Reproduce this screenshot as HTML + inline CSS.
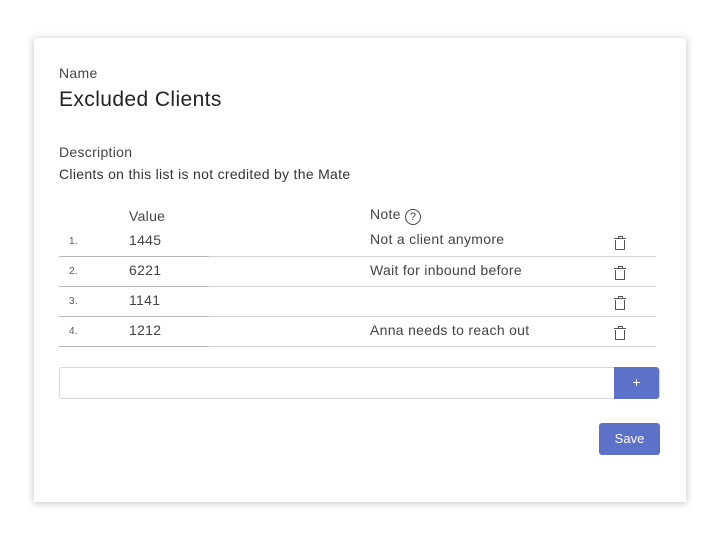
<!DOCTYPE html>
<html><head><style>
body{margin:0;width:725px;height:551px;background:#fff;font-family:"Liberation Sans",sans-serif;color:#333;position:relative;overflow:hidden}
.card{position:absolute;left:34px;top:38px;width:652px;height:464px;background:#fff;box-shadow:0 1px 8px rgba(0,0,0,.25)}
.t{position:absolute;white-space:nowrap;letter-spacing:.3px}
.line{position:absolute;left:59px;width:597px;height:1px;background:#d4d4d4}
.line:before{content:"";position:absolute;left:0;top:0;width:150px;height:1px;background:#b8b8b8}
.num{font-size:10px;color:#555}
.v{font-size:14px;color:#444}
.bin{position:absolute;width:8px;height:9px;border:1px solid #555;border-top:none}
.bin:before{content:"";position:absolute;left:-2px;top:-2px;width:12px;height:1px;background:#555}
.bin:after{content:"";position:absolute;left:2px;top:-4px;width:3px;height:1px;border:1px solid #555;border-bottom:none}
</style></head><body>
<div class="card"></div>
<div class="t" style="left:59px;top:65px;font-size:14px;color:#444">Name</div>
<div class="t" style="left:59px;top:88px;font-size:21px;color:#222;letter-spacing:.4px">Excluded Clients</div>
<div class="t" style="left:59px;top:144px;font-size:14px;color:#444">Description</div>
<div class="t" style="left:59px;top:166px;font-size:14px;color:#333">Clients on this list is not credited by the Mate</div>
<div class="t v" style="left:129px;top:208px">Value</div>
<div class="t v" style="left:370px;top:206px">Note <span style="display:inline-block;width:14px;height:14px;border:1px solid #444;border-radius:50%;font-size:11px;text-align:center;line-height:14px;vertical-align:-1px;letter-spacing:0">?</span></div>

<div class="t num" style="left:69px;top:236px">1.</div><div class="t v" style="left:129px;top:232px">1445</div><div class="t v" style="left:370px;top:231px">Not a client anymore</div><div class="bin" style="left:615px;top:240px"></div>
<div class="line" style="top:256px"></div>
<div class="t num" style="left:69px;top:266px">2.</div><div class="t v" style="left:129px;top:262px">6221</div><div class="t v" style="left:370px;top:262px">Wait for inbound before</div><div class="bin" style="left:615px;top:270px"></div>
<div class="line" style="top:286px"></div>
<div class="t num" style="left:69px;top:296px">3.</div><div class="t v" style="left:129px;top:292px">1141</div><div class="bin" style="left:615px;top:300px"></div>
<div class="line" style="top:316px"></div>
<div class="t num" style="left:69px;top:326px">4.</div><div class="t v" style="left:129px;top:322px">1212</div><div class="t v" style="left:370px;top:322px">Anna needs to reach out</div><div class="bin" style="left:615px;top:330px"></div>
<div class="line" style="top:346px"></div>

<div style="position:absolute;left:59px;top:367px;width:599px;height:30px;border:1px solid #d8d8d8;border-radius:3px"></div>
<div style="position:absolute;left:614px;top:367px;width:45px;height:32px;background:#5e71c9;border-radius:0 3px 3px 0;color:#fff;font-size:14px;text-align:center;line-height:31px">+</div>
<div style="position:absolute;left:599px;top:423px;width:61px;height:32px;background:#5e71c9;border-radius:3px;color:#fff;font-size:13px;text-align:center;line-height:32px">Save</div>
</body></html>
